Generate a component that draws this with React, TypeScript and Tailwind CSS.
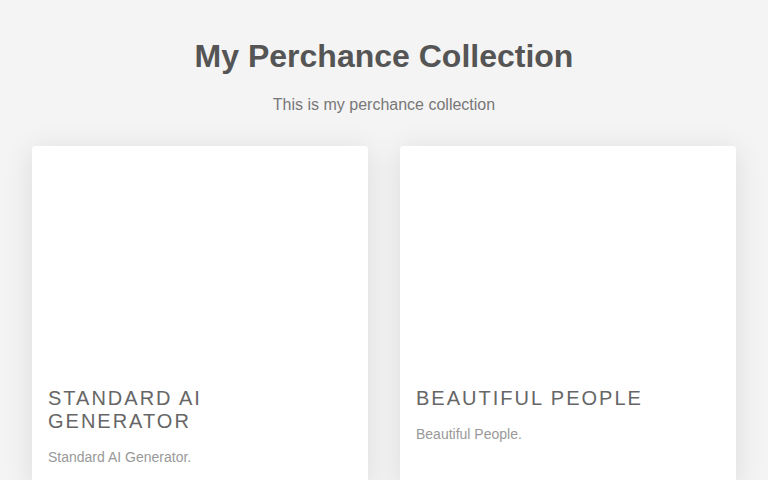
const cards = [
  { title: "Standard AI Generator", text: "Standard AI Generator." },
  { title: "Beautiful People", text: "Beautiful People." },
];

export default function App() {
  return (
    <div className="min-h-screen bg-[#f4f4f4] px-8 pt-[38px] font-['Liberation_Sans',Arial,sans-serif]">
      <h1 className="text-center text-[32px] font-bold leading-[37px] text-[#555555]">
        My Perchance Collection
      </h1>
      <p className="mt-[21px] text-center text-base leading-[18px] text-[#777777]">
        This is my perchance collection
      </p>
      <div className="mt-8 grid grid-cols-2 gap-8">
        {cards.map((card) => (
          <div
            key={card.title}
            className="overflow-hidden rounded bg-white shadow-[0_4px_30px_rgba(0,0,0,0.1)]"
          >
            <div className="h-[225px] bg-white" />
            <div className="px-4 pt-4 pb-6">
              <h2 className="text-[20px] uppercase leading-[23px] tracking-[2px] text-[#666666]">
                {card.title}
              </h2>
              <p className="mt-4 text-sm leading-4 text-[#999999]">{card.text}</p>
            </div>
          </div>
        ))}
      </div>
    </div>
  );
}
